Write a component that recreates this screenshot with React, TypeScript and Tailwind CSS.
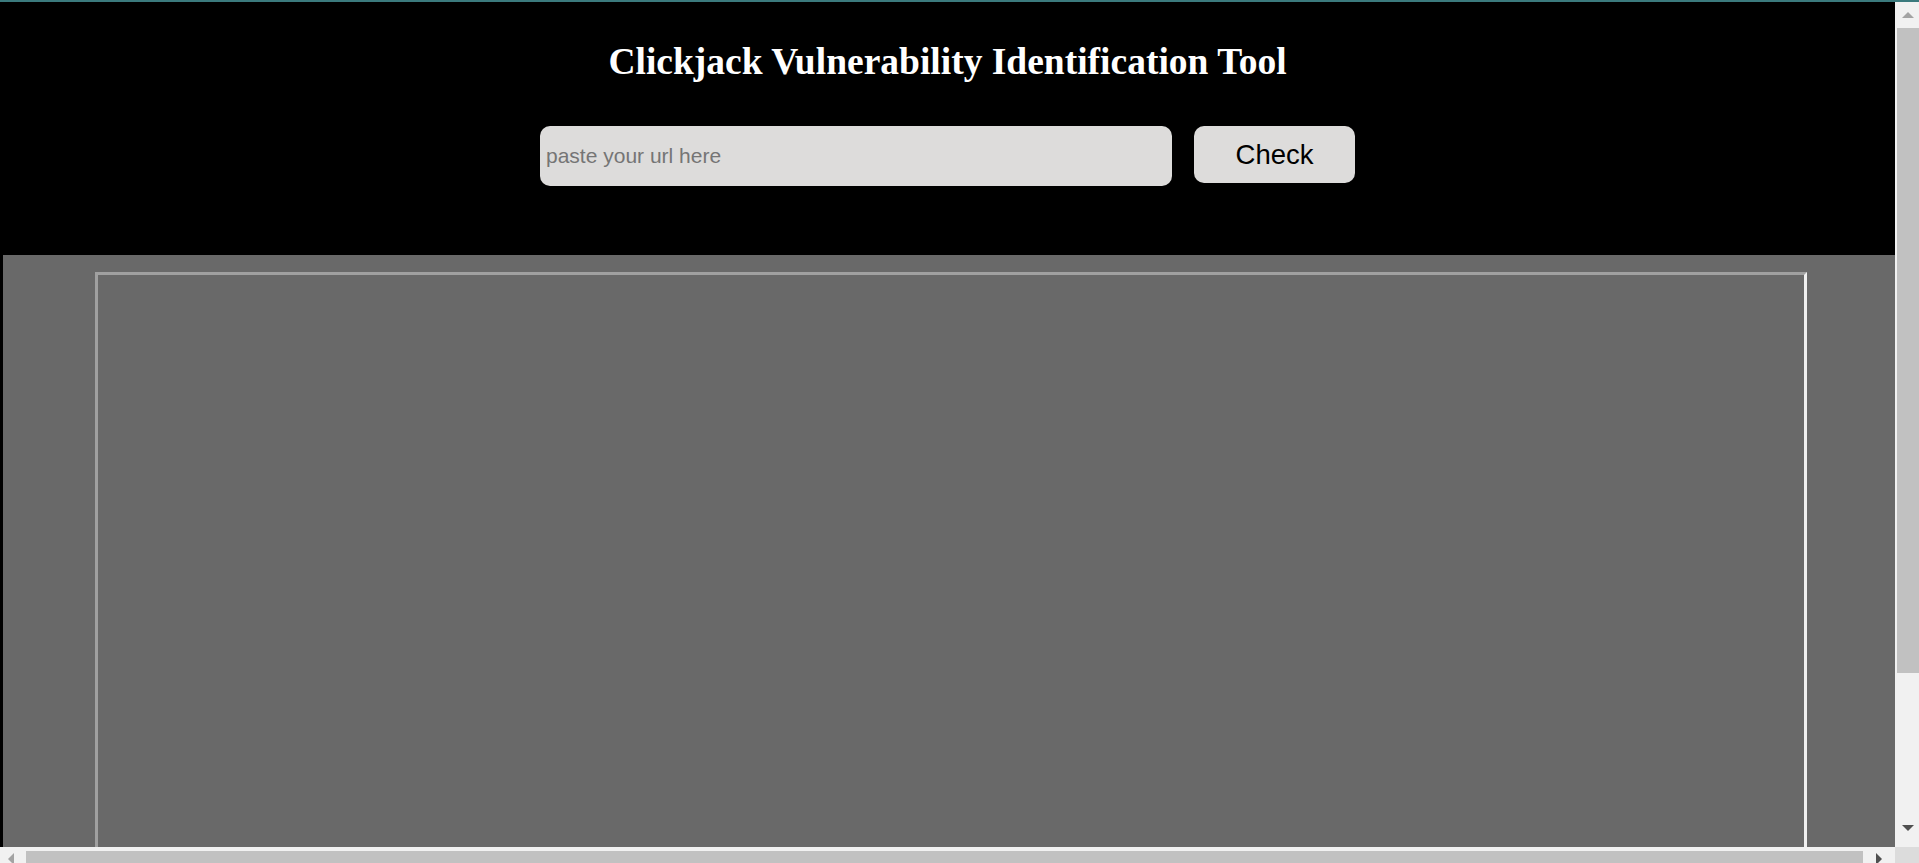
import React from "react";

function Arrow({ dir, color }: { dir: "up" | "down" | "left" | "right"; color: string }) {
  const pts: Record<string, string> = {
    up: "0,6 6,0 12,6",
    down: "0,0 12,0 6,6",
    left: "6,0 6,12 0,6",
    right: "0,0 0,12 6,6",
  };
  const vertical = dir === "up" || dir === "down";
  return (
    <svg width={vertical ? 12 : 6} height={vertical ? 6 : 12} viewBox={vertical ? "0 0 12 6" : "0 0 6 12"}>
      <polygon points={pts[dir]} fill={color} />
    </svg>
  );
}

export default function App() {
  return (
    <div className="w-[1919px] h-[863px] overflow-hidden flex flex-col bg-black">
      <div className="h-[2px] shrink-0 bg-[#3b7a7d]" />

      <div className="h-[845px] shrink-0 flex">
        {/* page */}
        <div className="flex-1 flex flex-col min-w-0">
          <header className="h-[253px] shrink-0 bg-black flex flex-col items-center">
            <h1
              className="mt-[39px] text-[37.5px] leading-[41px] font-bold text-white"
              style={{ fontFamily: '"Liberation Serif", "Times New Roman", serif' }}
            >
              Clickjack Vulnerability Identification Tool
            </h1>
            <div className="mt-[44px] flex items-start gap-[22px]" style={{ fontFamily: '"Liberation Sans", Arial, sans-serif' }}>
              <input
                type="text"
                placeholder="paste your url here"
                className="w-[632px] h-[60px] rounded-[10px] bg-[#dddcdb] pl-[6px] text-[21px] text-black placeholder:text-[#757575] outline-none border-0"
              />
              <button className="w-[161px] h-[57px] rounded-[10px] bg-[#dddcdb] text-[27.5px] text-black">
                Check
              </button>
            </div>
          </header>

          <main className="flex-1 min-h-0 overflow-hidden ml-[3px] bg-[#696969] pt-[17px] pl-[92px]">
            <div className="w-[1712px] h-[700px] border-[3px] border-t-[#a0a0a0] border-l-[#a0a0a0] border-r-[#f0f0f0] border-b-[#f0f0f0]" />
          </main>
        </div>

        {/* vertical scrollbar */}
        <div className="w-[24px] shrink-0 bg-[#f1f1f1] flex flex-col">
          <div className="h-[26px] shrink-0 flex items-center justify-center pl-[2px]">
            <Arrow dir="up" color="#a3a3a3" />
          </div>
          <div className="h-[645px] shrink-0 ml-[2px] bg-[#c1c1c1]" />
          <div className="flex-1" />
          <div className="h-[26px] shrink-0 flex items-start justify-center pt-[4px] pl-[2px]">
            <Arrow dir="down" color="#505050" />
          </div>
        </div>
      </div>

      {/* horizontal scrollbar */}
      <div className="h-[24px] shrink-0 flex">
        <div className="flex-1 bg-[#f1f1f1] flex items-center">
          <div className="w-[26px] shrink-0 flex justify-center pr-[4px]">
            <Arrow dir="left" color="#a3a3a3" />
          </div>
          <div className="w-[1837px] h-[20px] self-end bg-[#c1c1c1]" />
          <div className="flex-1 flex justify-center">
            <Arrow dir="right" color="#505050" />
          </div>
        </div>
        <div className="w-[24px] shrink-0 bg-[#dcdcdc]" />
      </div>
    </div>
  );
}
